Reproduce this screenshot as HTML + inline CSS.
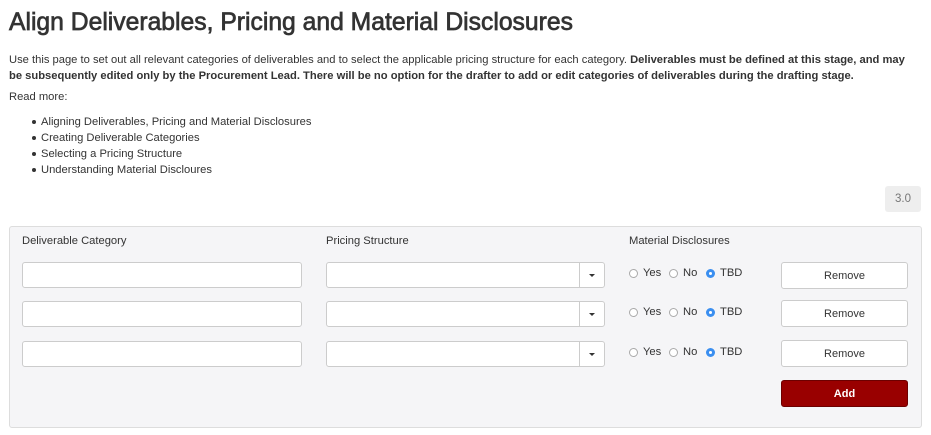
<!DOCTYPE html>
<html><head><style>
body{margin:0;width:931px;height:435px;background:#fff;font-family:"Liberation Sans",Arial,sans-serif;color:#333;position:relative;overflow:hidden}
.a{position:absolute;white-space:nowrap}
h1{position:absolute;left:9px;top:9px;margin:0;font-size:24.7px;font-weight:normal;-webkit-text-stroke:0.7px #333;color:#333}
p{margin:0}
.t{font-size:11.2px}
ul{position:absolute;left:41px;top:114px;margin:0;padding:0;font-size:11.2px;line-height:16px;list-style:none}
ul li{position:relative}
ul li:before{content:"";position:absolute;left:-9px;top:6px;width:4px;height:4px;border-radius:50%;background:#333}
.ver{position:absolute;left:885px;top:186px;width:36px;height:26px;background:#eee;border-radius:3px;color:#777;font-size:11.5px;text-align:center;line-height:26px}
.panel{position:absolute;left:9px;top:226px;width:911px;height:200px;background:#f5f5f7;border:1px solid #ddd;border-radius:3px}
.in{position:absolute;width:278px;height:24px;background:#fff;border:1px solid #ccc;border-radius:3px}
.sel{position:absolute;width:277px;height:24px;background:#fff;border:1px solid #ccc;border-radius:3px}
.sel:after{content:"";position:absolute;right:24px;top:0;bottom:0;border-left:1px solid #ccc}
.sel i{position:absolute;right:9px;top:11px;border-left:3px solid transparent;border-right:3px solid transparent;border-top:3px solid #333}
.r{position:absolute;width:7px;height:7px;border:1px solid #aaa;border-radius:50%;background:#fff}
.r.on{border:none;width:9px;height:9px;background:#3b8ff0}
.r.on:after{content:"";position:absolute;left:3px;top:3px;width:3px;height:3px;border-radius:50%;background:#fff}
.btn{position:absolute;left:781px;width:125px;height:25px;border:1px solid #ccc;border-radius:3px;background:#fff;font-size:11px;text-align:center;line-height:26px;color:#333}
.add{background:#990000;border-color:#6d0000;color:#fff;font-weight:bold}
</style></head><body>
<h1>Align Deliverables, Pricing and Material Disclosures</h1>
<p class="a t" style="left:9px;top:52px;line-height:16px">Use this page to set out all relevant categories of deliverables and to select the applicable pricing structure for each category. <b>Deliverables must be defined at this stage, and may<br>be subsequently edited only by the Procurement Lead. There will be no option for the drafter to add or edit categories of deliverables during the drafting stage.</b></p>
<p class="a t" style="left:9px;top:91px">Read more:</p>
<ul><li>Aligning Deliverables, Pricing and Material Disclosures</li><li>Creating Deliverable Categories</li><li>Selecting a Pricing Structure</li><li>Understanding Material Discloures</li></ul>
<div class="ver">3.0</div>
<div class="panel"></div>
<div class="a t" style="left:22px;top:235px">Deliverable Category</div>
<div class="a t" style="left:326px;top:235px">Pricing Structure</div>
<div class="a t" style="left:629px;top:235px">Material Disclosures</div>

<div class="in" style="left:22px;top:262px"></div>
<div class="in" style="left:22px;top:301px"></div>
<div class="in" style="left:22px;top:341px"></div>
<div class="sel" style="left:326px;top:262px"><i></i></div>
<div class="sel" style="left:326px;top:301px"><i></i></div>
<div class="sel" style="left:326px;top:341px"><i></i></div>

<div class="r" style="left:629px;top:269px"></div><div class="a t" style="left:643px;top:267px">Yes</div>
<div class="r" style="left:669px;top:269px"></div><div class="a t" style="left:683px;top:267px">No</div>
<div class="r on" style="left:706px;top:269px"></div><div class="a t" style="left:720px;top:267px">TBD</div>
<div class="r" style="left:629px;top:308px"></div><div class="a t" style="left:643px;top:306px">Yes</div>
<div class="r" style="left:669px;top:308px"></div><div class="a t" style="left:683px;top:306px">No</div>
<div class="r on" style="left:706px;top:308px"></div><div class="a t" style="left:720px;top:306px">TBD</div>
<div class="r" style="left:629px;top:348px"></div><div class="a t" style="left:643px;top:346px">Yes</div>
<div class="r" style="left:669px;top:348px"></div><div class="a t" style="left:683px;top:346px">No</div>
<div class="r on" style="left:706px;top:348px"></div><div class="a t" style="left:720px;top:346px">TBD</div>

<div class="btn" style="top:262px">Remove</div>
<div class="btn" style="top:300px">Remove</div>
<div class="btn" style="top:340px">Remove</div>
<div class="btn add" style="top:380px">Add</div>
</body></html>
